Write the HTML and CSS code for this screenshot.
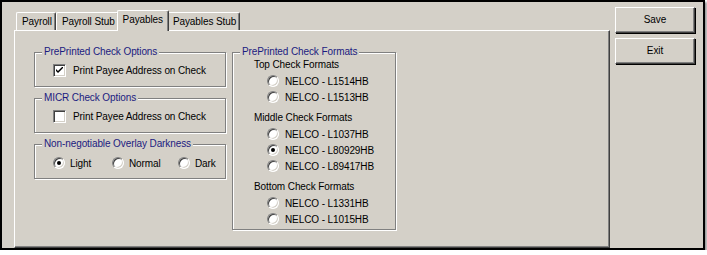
FILE: index.html
```html
<!DOCTYPE html>
<html>
<head>
<meta charset="utf-8">
<link rel="stylesheet" href="styles.css">
</head>
<body>
<div class="frame">
  <div class="main">
    <div class="tabs">
      <div class="tab">Payroll</div>
      <div class="tab">Payroll Stub</div>
      <div class="tab selected">Payables</div>
      <div class="tab">Payables Stub</div>
    </div>
    <div class="panel">
      <div class="col-left">
        <div class="group g-small">
          <span class="legend">PrePrinted Check Options</span>
          <div class="check-row">
            <span class="checkbox"><svg width="7" height="7" viewBox="0 0 7 7"><path d="M0 2 L0 4 L2 6 L7 1 L7 -1 L2 4 Z" fill="#000"/></svg></span>
            <span>Print Payee Address on Check</span>
          </div>
        </div>
        <div class="group g-small">
          <span class="legend">MICR Check Options</span>
          <div class="check-row">
            <span class="checkbox"></span>
            <span>Print Payee Address on Check</span>
          </div>
        </div>
        <div class="group g-small">
          <span class="legend">Non-negotiable Overlay Darkness</span>
          <div class="radio-line">
            <div class="radio-item r-light"><span class="radio on"></span><span>Light</span></div>
            <div class="radio-item r-normal"><span class="radio"></span><span>Normal</span></div>
            <div class="radio-item"><span class="radio"></span><span>Dark</span></div>
          </div>
        </div>
      </div>
      <div class="group g-formats">
        <span class="legend">PrePrinted Check Formats</span>
        <div class="section">
          <div class="heading">Top Check Formats</div>
          <div class="opt"><span class="radio"></span><span>NELCO - L1514HB</span></div>
          <div class="opt"><span class="radio"></span><span>NELCO - L1513HB</span></div>
        </div>
        <div class="section">
          <div class="heading">Middle Check Formats</div>
          <div class="opt"><span class="radio"></span><span>NELCO - L1037HB</span></div>
          <div class="opt"><span class="radio on"></span><span>NELCO - L80929HB</span></div>
          <div class="opt"><span class="radio"></span><span>NELCO - L89417HB</span></div>
        </div>
        <div class="section">
          <div class="heading">Bottom Check Formats</div>
          <div class="opt"><span class="radio"></span><span>NELCO - L1331HB</span></div>
          <div class="opt"><span class="radio"></span><span>NELCO - L1015HB</span></div>
        </div>
      </div>
    </div>
  </div>
  <div class="buttons">
    <div class="btn">Save</div>
    <div class="btn">Exit</div>
  </div>
</div>
</body>
</html>
```

FILE: styles.css
```css
html, body {
  margin: 0;
  padding: 0;
  background: #ffffff;
}
body {
  font-family: "Liberation Sans", Arial, sans-serif;
  font-size: 10px;
  letter-spacing: -0.1px;
  color: #000;
}
.frame {
  width: 701px;
  height: 246px;
  border: 2px solid #000;
  background: #d4d0c8;
  display: flex;
  box-shadow: 2px 2px 2px #9a9a9a;
}
.main {
  margin-left: 12px;
  width: 596px;
  display: flex;
  flex-direction: column;
}
.tabs {
  display: flex;
  margin-top: 8px;
  padding-left: 2px;
  height: 20px;
  position: relative;
  z-index: 2;
}
.tab {
  height: 17px;
  margin-top: 2px;
  padding: 0 3px 0 5px;
  line-height: 18px;
  border-top: 1px solid #fff;
  border-left: 1px solid #fff;
  border-right: 1px solid #404040;
  box-shadow: inset -1px 0 0 #808080;
  border-radius: 2px 2px 0 0;
  white-space: nowrap;
}
.tab.selected {
  height: 20px;
  margin-top: 0;
  line-height: 17px;
  padding: 0 5px 0 5px;
  margin-left: -2px;
  margin-right: -2px;
  background: #d4d0c8;
  position: relative;
  z-index: 3;
}
.panel {
  height: 211px;
  border-top: 1px solid #fff;
  border-left: 1px solid #fff;
  border-right: 1px solid #404040;
  border-bottom: 1px solid #404040;
  box-shadow: inset -1px -1px 0 #808080;
  display: flex;
  align-items: flex-start;
  padding-left: 19px;
  padding-top: 21px;
  box-sizing: content-box;
  width: 575px;
}
.col-left {
  display: flex;
  flex-direction: column;
  gap: 11px;
  width: 192px;
}
.group {
  position: relative;
  border: 1px solid #808080;
  box-shadow: inset 1px 1px 0 #fff, 1px 1px 0 #fff;
  box-sizing: border-box;
}
.g-small {
  height: 35px;
}
.g-formats {
  margin-left: 6px;
  width: 164px;
  height: 178px;
  padding-top: 4px;
  padding-left: 21px;
}
.legend {
  position: absolute;
  top: -8px;
  left: 7px;
  padding: 0 2px 0 2px;
  background: #d4d0c8;
  color: #1b1b80;
  line-height: 14px;
  white-space: nowrap;
}
.check-row {
  display: flex;
  align-items: center;
  gap: 7px;
  margin-top: 10px;
  margin-left: 18px;
  height: 14px;
}
.checkbox {
  width: 9px;
  height: 9px;
  background: #fff;
  border-top: 1px solid #808080;
  border-left: 1px solid #808080;
  border-right: 1px solid #fff;
  border-bottom: 1px solid #fff;
  box-shadow: inset 1px 1px 0 #404040, inset -1px -1px 0 #d4d0c8;
  padding: 1px;
  display: flex;
  align-items: center;
  justify-content: center;
}
.checkbox svg { display: block; }
.radio-line {
  display: flex;
  align-items: center;
  margin-top: 11px;
  margin-left: 18px;
  height: 14px;
}
.radio-item {
  display: flex;
  align-items: center;
  gap: 5px;
}
.r-light { width: 59px; }
.r-normal { width: 66px; }
.radio {
  width: 10px;
  height: 10px;
  border-radius: 50%;
  background: #fff;
  border: 1px solid;
  border-color: #808080 #fff #fff #808080;
  box-shadow: inset 1px 1px 0 #404040, inset -1px -1px 0 #d4d0c8;
  position: relative;
  flex: none;
}
.radio.on::after {
  content: "";
  position: absolute;
  left: 3px;
  top: 3px;
  width: 4px;
  height: 4px;
  border-radius: 50%;
  background: #000;
}
.section {
  margin-bottom: 5px;
}
.heading {
  height: 16px;
  line-height: 16px;
}
.opt {
  display: flex;
  align-items: center;
  gap: 6px;
  height: 16px;
  margin-left: 13px;
}
.buttons {
  margin-left: 5px;
  margin-top: 5px;
  display: flex;
  flex-direction: column;
  gap: 5px;
}
.btn {
  width: 78px;
  height: 24px;
  border-top: 1px solid #fff;
  border-left: 1px solid #fff;
  border-right: 1px solid #404040;
  border-bottom: 1px solid #404040;
  box-shadow: inset -1px -1px 0 #808080, 1px 1px 0 #000;
  text-align: center;
  line-height: 24px;
}
```
